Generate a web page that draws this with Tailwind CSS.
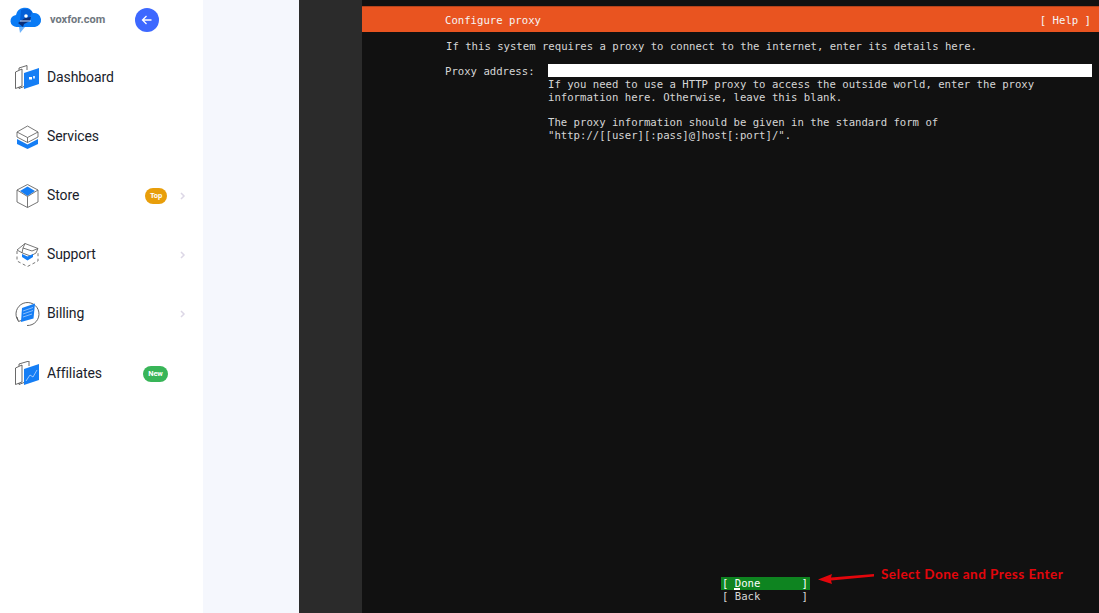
<!DOCTYPE html>
<html lang="en">
<head>
    <meta charset="UTF-8">
    <meta name="viewport" content="width=device-width, initial-scale=1.0">
    <title>Configure proxy</title>
    <script src="https://cdn.jsdelivr.net/npm/@tailwindcss/browser@4"></script>
</head>
<body class="bg-[#f5f7fd] overflow-hidden">
    <div class="flex w-[1099px] h-[613px]">

        <!-- sidebar -->
        <aside class="w-[203px] shrink-0 bg-white font-['Roboto',sans-serif]">
            <div class="flex items-center h-[48px] pl-[10px] pb-[8px]">
                <svg class="w-[32px] h-[28px]" viewBox="0 0 32 28">
                    <path d="M7 21a6 6 0 0 1-1-12 9 9 0 0 1 17-2 7 7 0 0 1 2 14z" fill="#0a7bf5"/>
                    <path d="M11 4a9 9 0 0 1 11 2l-3 8-9 1z" fill="#045fd8"/>
                    <path d="M8 17l7-5 6-1-1 4-6 3-1 3z" fill="#0b2f7a"/>
                    <circle cx="16" cy="10" r="1.800" fill="#fff"/>
                    <path d="M10 15h11" stroke="#cfe3ff" stroke-width="1"/>
                    <path d="M9 21l1 6 5-6z" fill="#6db2fb"/>
                </svg>
                <span class="ml-[8px] text-[11px] font-bold text-[#6f7780]">voxfor.com</span>
                <span class="ml-[30px] w-[24px] h-[24px] rounded-full bg-[#3d68ff] flex items-center justify-center">
                    <svg class="w-[12px] h-[12px]" viewBox="0 0 12 12" fill="none" stroke="#fff" stroke-width="1.300">
                        <path d="M10.500 6H1.500M5.500 2l-4 4 4 4"/>
                    </svg>
                </span>
            </div>

            <nav class="text-[14px] tracking-[-0.1px] text-[#1a1d2b]">
                <div class="flex items-center h-[59px] pl-[15px]">
                    <svg class="w-[25px] h-[25px] shrink-0" viewBox="0 0 25 25" fill="none">
                        <path d="M.5 7L7 4v17l-6.500 2.500zM4 5V3l8-2.500V5" stroke="#444" stroke-width="0.800"/>
                        <path d="M4 22v1.500l5-2" stroke="#444" stroke-width="0.800"/>
                        <path d="M9 8l15-5v16L9 24z" fill="#157ef5"/>
                        <rect x="14" y="12" width="3" height="2.500" fill="#fff"/>
                        <rect x="18" y="11" width="2" height="2.500" fill="#cfe3ff"/>
                    </svg>
                    <span class="ml-[7px]">Dashboard</span>
                </div>
                <div class="flex items-center h-[59px] pl-[15px]">
                    <svg class="w-[25px] h-[25px] shrink-0" viewBox="0 0 25 25" fill="none">
                        <path d="M2 15l10.500 5.500L23 15v5l-10.500 5L2 20z" fill="#157ef5"/>
                        <path d="M2 8l10.500-6L23 8v5l-10.500 5.500L2 13z" fill="#fff" stroke="#555" stroke-width="0.800"/>
                        <path d="M2 8l10.500 5.500L23 8M12.500 13.500v5" stroke="#555" stroke-width="0.800"/>
                    </svg>
                    <span class="ml-[7px]">Services</span>
                </div>
                <div class="flex items-center h-[59px] pl-[15px]">
                    <svg class="w-[25px] h-[25px] shrink-0" viewBox="0 0 25 25" fill="none">
                        <path d="M12.500 1.500L23 7v12l-10.500 5.500L2 19V7z" stroke="#666" stroke-width="0.900"/>
                        <path d="M12.500 3.500L20 8l-7.500 5L5 8z" fill="#157ef5"/>
                        <path d="M2 7l10.500 6.500L23 7M12.500 13.500v11" stroke="#666" stroke-width="0.900"/>
                    </svg>
                    <span class="ml-[7px] w-[98px]">Store</span>
                    <span class="w-[22px] h-[16px] rounded-full bg-[#e89e0a] text-white text-[7.500px] font-bold flex items-center justify-center">Top</span>
                    <svg class="ml-[13px] w-[6px] h-[8px]" viewBox="0 0 6 8" fill="none" stroke="#dcd7e6" stroke-width="1.500"><path d="M1 1l3 3-3 3"/></svg>
                </div>
                <div class="flex items-center h-[59px] pl-[15px]">
                    <svg class="w-[25px] h-[25px] shrink-0" viewBox="0 0 25 25" fill="none">
                        <path d="M2 9v10l10.500 5.500L23 19V9" stroke="#666" stroke-width="0.900" stroke-dasharray="3 2.500"/>
                        <path d="M2 8l8-6.500L23 6.500 21 11l-5.500 3-8-3z" fill="#fff" stroke="#555" stroke-width="0.800"/>
                        <path d="M10 1.500L8 6l9 3 6-2.500M8 6l-1 5" stroke="#555" stroke-width="0.800"/>
                        <path d="M7 12l5.500 2.500L18 12v3l-5.500 3.500L7 15z" fill="#157ef5"/>
                    </svg>
                    <span class="ml-[7px] w-[133px]">Support</span>
                    <svg class="w-[6px] h-[8px]" viewBox="0 0 6 8" fill="none" stroke="#dcd7e6" stroke-width="1.500"><path d="M1 1l3 3-3 3"/></svg>
                </div>
                <div class="flex items-center h-[59px] pl-[15px]">
                    <svg class="w-[25px] h-[25px] shrink-0" viewBox="0 0 25 25" fill="none">
                        <path d="M3 19.500A11.500 11.500 0 1 1 12 24.500" stroke="#555" stroke-width="0.900"/>
                        <path d="M2 16l1.500 4.500 4-1.500" stroke="#555" stroke-width="0.900"/>
                        <path d="M7 7l13-4.500-1.500 15L6 21z" fill="#157ef5"/>
                        <path d="M8 10l10-3.500M8 13l10-3.500M8 16l9-3" stroke="#bcd9ff" stroke-width="0.700"/>
                    </svg>
                    <span class="ml-[7px] w-[133px]">Billing</span>
                    <svg class="w-[6px] h-[8px]" viewBox="0 0 6 8" fill="none" stroke="#dcd7e6" stroke-width="1.500"><path d="M1 1l3 3-3 3"/></svg>
                </div>
                <div class="flex items-center h-[59px] pl-[15px] mt-px">
                    <svg class="w-[25px] h-[25px] shrink-0" viewBox="0 0 25 25" fill="none">
                        <path d="M.5 7L7 4v17l-6.500 2.500zM4 5V3l10-3v5" stroke="#444" stroke-width="0.800"/>
                        <path d="M4 22v1.500l5-2" stroke="#444" stroke-width="0.800"/>
                        <path d="M9 8l15-5v16L9 24z" fill="#157ef5"/>
                        <path d="M11 20l4-6 3 2 4-7" stroke="#bcd9ff" stroke-width="0.800"/>
                    </svg>
                    <span class="ml-[7px] w-[96px]">Affiliates</span>
                    <span class="w-[25px] h-[16px] rounded-full bg-[#38b558] text-white text-[7.500px] font-bold flex items-center justify-center">New</span>
                </div>
            </nav>
        </aside>

        <div class="w-[96px] shrink-0"></div>
        <div class="w-[63px] shrink-0 bg-[#2b2b2b]"></div>

        <!-- installer terminal -->
        <main class="relative flex-1 flex flex-col bg-[#111111] text-[#d6d6d6] font-['DejaVu_Sans_Mono',monospace] text-[10.630px] leading-[12.800px]">
            <div class="mt-[6px] h-[26px] bg-[#e95420] border-t border-[#b5431b] flex items-center justify-between pt-[3px] pl-[83px] pr-[8px] text-[#f5f5f5]">
                <span>Configure proxy</span>
                <span>[ Help ]</span>
            </div>

            <div class="pl-[84px] pt-[9px]">
                <p>If this system requires a proxy to connect to the internet, enter its details here.</p>
                <div class="flex mt-[10px]">
                    <span class="w-[103px] pt-[2px] -ml-px">Proxy address:</span>
                    <div class="w-[544px]">
                        <div class="h-[13px] bg-white"></div>
                        <p class="mt-[2px]">If you need to use a HTTP proxy to access the outside world, enter the proxy</p>
                        <p>information here. Otherwise, leave this blank.</p>
                        <p class="mt-[12.800px]">The proxy information should be given in the standard form of</p>
                        <p>"http://[[user][:pass]@]host[:port]/".</p>
                    </div>
                </div>
            </div>

            <div class="mt-auto mb-[10px] ml-[359px] w-[89px]">
                <div class="relative flex justify-between h-[13px] bg-[#0e8420] text-white pl-px pr-[2px] pt-px whitespace-pre"><span>[ Done</span><span>]</span><span class="absolute left-[13px] top-[11px] w-[6px] h-[2px] bg-white"></span></div>
                <div class="flex justify-between h-[13px] pl-px pr-[2px] pt-px whitespace-pre"><span>[ Back</span><span>]</span></div>
            </div>

            <!-- annotation on top of the screenshot -->
            <svg class="absolute left-[454px] top-[570px] w-[60px] h-[16px]" viewBox="0 0 60 16">
                <path d="M2 9.500L16 4l-1 3.500L58 4v2.500L15 10.500l1 3.500z" fill="#e3060c"/>
            </svg>
            <span class="absolute left-[519px] top-[566px] font-['Lato',sans-serif] font-bold text-[13.500px] leading-[16px] tracking-[0.480px] text-[#e3060c]">Select Done and Press Enter</span>
        </main>
    </div>
</body>
</html>
